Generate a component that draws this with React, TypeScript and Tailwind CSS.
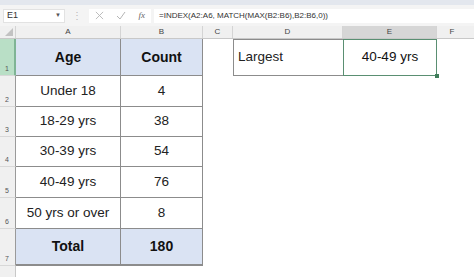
import React from "react";

const font = { fontFamily: '"Liberation Sans", Arial, sans-serif' };

const rows = [
  { n: 1, h: "h-[37px]" },
  { n: 2, h: "h-[31px]" },
  { n: 3, h: "h-[30px]" },
  { n: 4, h: "h-[30px]" },
  { n: 5, h: "h-[31px]" },
  { n: 6, h: "h-[31px]" },
  { n: 7, h: "h-[37px]" },
];

const data: [string, string][] = [
  ["Under 18", "4"],
  ["18-29 yrs", "38"],
  ["30-39 yrs", "54"],
  ["40-49 yrs", "76"],
  ["50 yrs or over", "8"],
];

export default function App() {
  return (
    <div className="w-[474px] h-[277px] overflow-hidden bg-white text-[#222]" style={font}>
      {/* top band */}
      <div className="h-[5px] bg-[#e3e7ee]" />
      {/* formula bar */}
      <div className="h-[21px] bg-[#f4f4f4] flex items-center pl-[3px]">
        <div className="w-[62px] h-[14px] bg-white border border-[#e2e2e2] flex items-center justify-between px-[3px]">
          <span className="text-[9px] text-[#333]">E1</span>
          <span className="text-[6px] text-[#555]">▼</span>
        </div>
        <div className="w-[24px] flex justify-center text-[10px] text-[#b8b8b8] leading-none">⋮</div>
        <div className="w-[62px] h-[14px] bg-white flex items-center justify-around">
          <svg width="9" height="9" viewBox="0 0 10 10"><path d="M1 1 L9 9 M9 1 L1 9" stroke="#b5b5b5" strokeWidth="1" fill="none" /></svg>
          <svg width="10" height="9" viewBox="0 0 10 9"><path d="M1 5 L4 8 L9 1" stroke="#b5b5b5" strokeWidth="1" fill="none" /></svg>
          <span className="text-[9px] italic text-[#666]" style={{ fontFamily: '"Liberation Serif", serif' }}>fx</span>
        </div>
        <div className="ml-[3px] flex-1 h-[14px] bg-white flex items-center pl-[5px]">
          <span className="text-[8px] text-[#333] whitespace-nowrap">=INDEX(A2:A6, MATCH(MAX(B2:B6),B2:B6,0))</span>
        </div>
      </div>
      {/* column headers */}
      <div className="h-[13px] bg-[#f0f0f0] grid grid-cols-[16px_105px_82px_30px_110px_94px_1fr] border-b border-[#c8c8c8]">
        <div className="border-r border-[#d4d4d4] relative">
          <svg className="absolute right-[2px] bottom-[2px]" width="8" height="8" viewBox="0 0 8 8"><path d="M8 0 L8 8 L0 8 Z" fill="#c2c2c2" /></svg>
        </div>
        {["A", "B", "C", "D"].map((c) => (
          <div key={c} className="border-r border-[#d4d4d4] flex items-center justify-center text-[8px] text-[#444]">{c}</div>
        ))}
        <div className="border-r border-[#d4d4d4] bg-[#d6d6d6] flex items-center justify-center text-[8px] text-[#444]">E</div>
        <div className="w-[30px] flex items-center justify-center text-[8px] text-[#444]">F</div>
      </div>
      {/* sheet body */}
      <div className="grid grid-cols-[16px_105px_82px_30px_110px_94px_1fr]">
        {rows.map((r, i) => {
          const isHead = r.n === 1;
          const isTotal = r.n === 7;
          const fill = isHead || isTotal ? "bg-[#dae3f3]" : "bg-white";
          const bold = isHead || isTotal ? "font-bold text-[14px] text-[#111]" : "text-[13.5px] text-[#222]";
          let a = "";
          let b = "";
          if (isHead) { a = "Age"; b = "Count"; }
          else if (isTotal) { a = "Total"; b = "180"; }
          else { a = data[i - 1][0]; b = data[i - 1][1]; }
          return (
            <React.Fragment key={r.n}>
              <div className={`${r.h} ${isHead ? "bg-[#b9dfc6] border-r-2 border-r-[#7fb495]" : "bg-[#f0f0f0] border-r border-r-[#9a9a9a]"} border-b border-b-[#d8d8d8] flex items-end pl-[5px] pb-[1px] text-[7px] text-[#555]`}>
                {r.n}
              </div>
              <div className={`${r.h} ${fill} border-b ${isTotal ? "border-b-2" : ""} border-[#8c8c8c] border-r flex items-center justify-center ${bold}`}>{a}</div>
              <div className={`${r.h} ${fill} border-b ${isTotal ? "border-b-2" : ""} border-[#8c8c8c] border-r flex items-center justify-center ${bold}`}>{b}</div>
              <div className={`${r.h}`} />
              {isHead ? (
                <>
                  <div className={`${r.h} border border-[#8c8c8c] border-r-0 flex items-center pl-[4px] text-[13.5px] text-[#222]`}>Largest</div>
                  <div className={`${r.h} relative border-[1.5px] border-[#5a8f72] flex items-center justify-center text-[13.5px] text-[#111]`}>
                    40-49 yrs
                    <div className="absolute right-[-3px] bottom-[-3px] w-[4px] h-[4px] bg-[#3f7d5a]" />
                  </div>
                </>
              ) : (
                <>
                  <div className={r.h} />
                  <div className={r.h} />
                </>
              )}
              <div className={r.h} />
            </React.Fragment>
          );
        })}
        <div className="h-[11px] bg-[#f0f0f0] border-r border-[#c8c8c8]" />
      </div>
    </div>
  );
}
